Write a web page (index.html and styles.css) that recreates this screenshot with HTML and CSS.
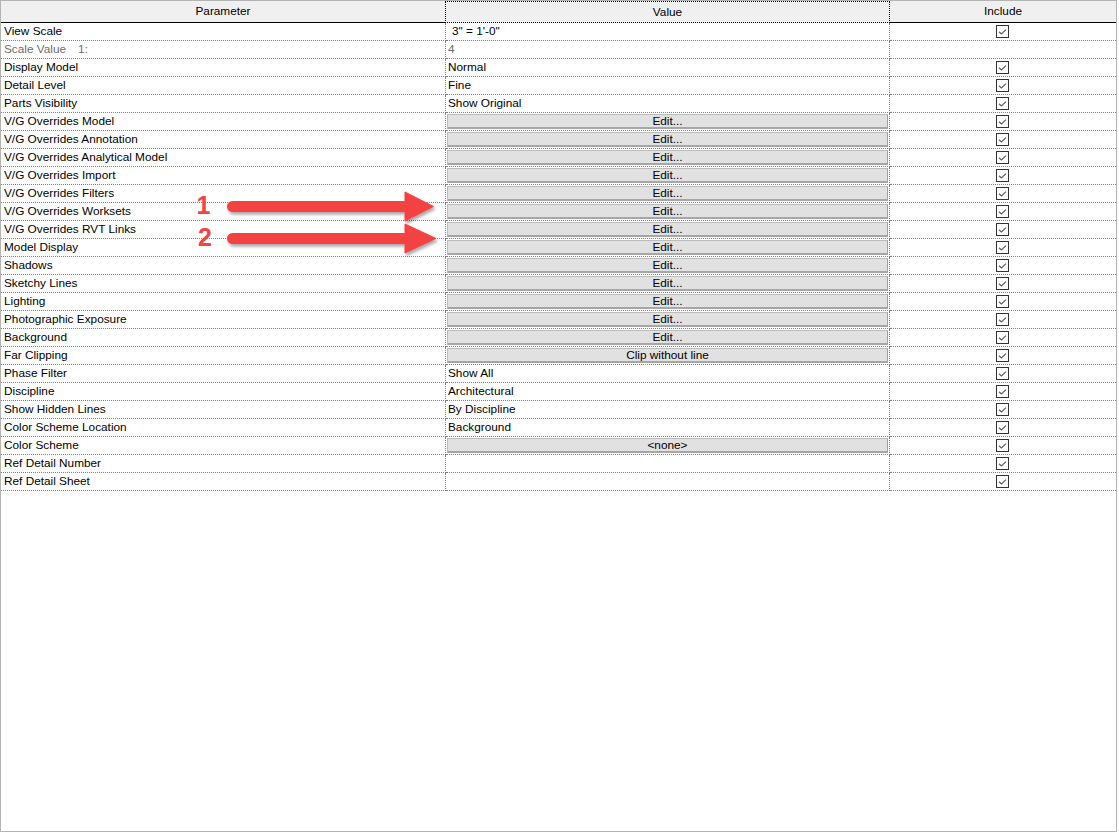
FILE: index.html
```html
<!DOCTYPE html>
<html>
<head>
<meta charset="utf-8">
<link rel="stylesheet" href="styles.css">
</head>
<body>
<div class="frame">
  <div class="head">
    <div class="hcell">Parameter</div>
    <div class="hcell focus">Value</div>
    <div class="hcell">Include</div>
  </div>
  <div class="grid" id="grid"></div>
  <svg class="arrows" width="1119" height="834" viewBox="0 0 1119 834">
    <defs>
      <filter id="sh" x="-10%" y="-50%" width="120%" height="200%">
        <feDropShadow dx="1.5" dy="2.5" stdDeviation="1.6" flood-color="#000" flood-opacity="0.35"/>
      </filter>
    </defs>
    <g filter="url(#sh)" fill="#f44343" stroke="#f44343">
      <line x1="232.5" y1="206.5" x2="408" y2="206.5" stroke-width="11" stroke-linecap="round"/>
      <polygon points="405,192 433.5,206.5 405,221" stroke-width="1" stroke-linejoin="round"/>
      <line x1="232.5" y1="238.5" x2="408" y2="238.5" stroke-width="11" stroke-linecap="round"/>
      <polygon points="405,224 436,238.5 405,253" stroke-width="1" stroke-linejoin="round"/>
    </g>
    <text class="num" x="196.5" y="214">1</text>
    <text class="num" x="198" y="246">2</text>
  </svg>
</div>
<script src="app.js"></script>
</body>
</html>
```
FILE: app.js
```js
var rows = [
  ["View Scale", "3\" = 1'-0\"", "field", true],
  ["Scale Value", "4", "gray", false],
  ["Display Model", "Normal", "text", true],
  ["Detail Level", "Fine", "text", true],
  ["Parts Visibility", "Show Original", "text", true],
  ["V/G Overrides Model", "Edit...", "btn", true],
  ["V/G Overrides Annotation", "Edit...", "btn", true],
  ["V/G Overrides Analytical Model", "Edit...", "btn", true],
  ["V/G Overrides Import", "Edit...", "btn", true],
  ["V/G Overrides Filters", "Edit...", "btn", true],
  ["V/G Overrides Worksets", "Edit...", "btn", true],
  ["V/G Overrides RVT Links", "Edit...", "btn", true],
  ["Model Display", "Edit...", "btn", true],
  ["Shadows", "Edit...", "btn", true],
  ["Sketchy Lines", "Edit...", "btn", true],
  ["Lighting", "Edit...", "btn", true],
  ["Photographic Exposure", "Edit...", "btn", true],
  ["Background", "Edit...", "btn", true],
  ["Far Clipping", "Clip without line", "btn", true],
  ["Phase Filter", "Show All", "text", true],
  ["Discipline", "Architectural", "text", true],
  ["Show Hidden Lines", "By Discipline", "text", true],
  ["Color Scheme Location", "Background", "text", true],
  ["Color Scheme", "<none>", "btn", true],
  ["Ref Detail Number", "", "text", true],
  ["Ref Detail Sheet", "", "text", true]
];
var check = '<svg class="cb" width="13" height="13" viewBox="0 0 13 13"><rect x="0.5" y="0.5" width="12" height="12" fill="#fff" stroke="#333"/><path d="M3 6.8 L5.4 9 L10 4.6" fill="none" stroke="#5a5a5a" stroke-width="1.2"/></svg>';
var g = document.getElementById("grid");
var html = "";
function esc(s) { return s.replace(/&/g, "&amp;").replace(/</g, "&lt;").replace(/>/g, "&gt;"); }
rows.forEach(function (r) {
  var p = r[0] === "Scale Value"
    ? '<div class="cell c1 gray">Scale Value<span class="ratio">1:</span></div>'
    : '<div class="cell c1">' + esc(r[0]) + '</div>';
  var v;
  if (r[2] === "btn") v = '<div class="cell c2"><div class="btn">' + esc(r[1]) + '</div></div>';
  else if (r[2] === "field") v = '<div class="cell c2 field">' + esc(r[1]) + '</div>';
  else if (r[2] === "gray") v = '<div class="cell c2 gray">' + esc(r[1]) + '</div>';
  else v = '<div class="cell c2">' + esc(r[1]) + '</div>';
  var c = '<div class="cell c3">' + (r[3] ? check : '') + '</div>';
  html += p + v + c;
});
g.innerHTML = html;
```
FILE: styles.css
```css
html, body {
  margin: 0;
  padding: 0;
  background: #fff;
}
body {
  font-family: "Liberation Sans", Arial, sans-serif;
  font-size: 11.8px;
  color: #000;
}
.frame {
  position: relative;
  box-sizing: border-box;
  width: 1117px;
  height: 832px;
  border: 1px solid #b4b4b4;
  background: #fff;
}
.head {
  display: grid;
  grid-template-columns: 444px 445px 226px;
  height: 22px;
}
.hcell {
  box-sizing: border-box;
  height: 22px;
  background: #f0f0f0;
  border-bottom: 1px solid #000;
  text-align: center;
  line-height: 21px;
}
.hcell.focus {
  border: 1px dotted #000;
  line-height: 20px;
}
.grid {
  display: grid;
  grid-template-columns: 445px 444px 226px;
  grid-auto-rows: 18px;
}
.cell {
  box-sizing: border-box;
  height: 18px;
  border-bottom: 1px dotted #808080;
  line-height: 17px;
  white-space: nowrap;
  overflow: hidden;
}
.c1 {
  padding-left: 3px;
  border-right: 1px dotted #808080;
}
.c2 {
  padding-left: 2px;
  border-right: 1px dotted #808080;
}
.c2.field {
  padding-left: 6px;
}
.c3 {
  display: flex;
  justify-content: center;
  align-items: center;
  padding-right: 1px;
}
.gray {
  color: #6d6d6d;
}
.ratio {
  margin-left: 12px;
}
.btn {
  box-sizing: border-box;
  height: 15px;
  margin: 1px 0 0 -1px;
  width: 441px;
  background: #e1e1e1;
  border: 1px solid #bcbcbc;
  border-right-color: #a0a0a0;
  border-bottom: 2px solid #a6a6a6;
  text-align: center;
  line-height: 12px;
}
.cb {
  display: block;
}
.arrows {
  position: absolute;
  left: -1px;
  top: -1px;
  pointer-events: none;
}
.num {
  font-family: "Liberation Sans", Arial, sans-serif;
  font-weight: bold;
  font-size: 25px;
  fill: #f44343;
}
```
